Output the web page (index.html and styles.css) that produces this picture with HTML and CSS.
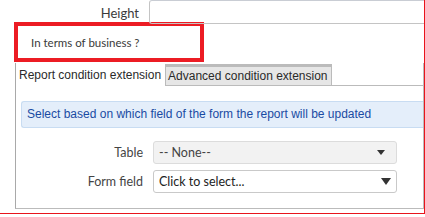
FILE: index.html
```html
<!DOCTYPE html>
<html lang="en">
<head>
  <meta charset="UTF-8">
  <title>Report condition</title>
  <link rel="stylesheet" href="styles.css">
</head>
<body>
  <div class="frame">
    <div class="height-row">
      <label class="row-label">Height</label>
      <div class="text-input"></div>
    </div>

    <div class="note">In terms of business ?</div>

    <div class="panel">
      <div class="tabs">
        <div class="tab active">Report condition extension</div>
        <div class="tab">Advanced condition extension</div>
        <div class="tab-rest"></div>
      </div>

      <div class="info">Select based on which field of the form the report will be updated</div>

      <div class="field-row">
        <label class="field-label">Table</label>
        <div class="select disabled">
          <span>-- None--</span>
          <span class="arrow small"></span>
        </div>
      </div>
      <div class="field-row">
        <label class="field-label">Form field</label>
        <div class="select">
          <span>Click to select...</span>
          <span class="arrow"></span>
        </div>
      </div>
    </div>
  </div>
</body>
</html>
```

FILE: styles.css
```css
body {
  margin: 0;
  padding: 0;
  background: #fff;
  font-family: Lato, "Liberation Sans", sans-serif;
  color: #3a3a3a;
  overflow: hidden;
}

.frame {
  width: 424px;
  height: 213px;
  border-right: 1px solid #e8141c;
  border-bottom: 1px solid #e8141c;
  overflow: hidden;
}

.height-row {
  display: flex;
  height: 22px;
}

.row-label {
  width: 139px;
  text-align: right;
  font-size: 13px;
  line-height: 26px;
}

.text-input {
  margin-left: 10px;
  flex: 1;
  height: 22px;
  border: 1px solid #c4c4c4;
  border-top-color: #c9cdd4;
  border-right: none;
  border-radius: 3px 0 0 3px;
  margin-bottom: -1px;
}

.note {
  margin-left: 14px;
  width: 169px;
  height: 32px;
  border: 4px solid #ec1c24;
  padding-left: 13px;
  font-size: 11.5px;
  line-height: 33px;
}

.panel {
  margin-top: 1px;
  margin-left: 15px;
  width: 407px;
  height: 145px;
  border-left: 1px solid #a9a9a9;
  border-right: 1px solid #bbb;
  border-bottom: 1px solid #bbb;
}

.tabs {
  display: flex;
  height: 23px;
}

.tab {
  font-family: "Liberation Sans", sans-serif;
  font-size: 12px;
  padding: 0 3px;
  line-height: 24px;
  color: #2a2a2a;
  border-bottom: 1px solid #bbb;
}

.tab.active {
  border-bottom-color: transparent;
  padding-right: 4px;
}

.tab:not(.active) {
  background: #e6e6e6;
  border: 1px solid #bbb;
  border-top: 3px solid #bbb;
  margin-top: 1px;
  line-height: 19px;
  padding: 0 3px 0 2px;
}

.tab-rest {
  flex: 1;
  border-bottom: 1px solid #bbb;
}

.info {
  margin: 15px 0 0 5px;
  height: 25px;
  border: 1px solid #c8dcf2;
  border-right: none;
  border-radius: 3px 0 0 3px;
  background: #e4eefa;
  color: #1a4ba3;
  font-family: "Liberation Sans", sans-serif;
  font-size: 12px;
  line-height: 25px;
  padding-left: 5px;
}

.field-row {
  display: flex;
  align-items: center;
  margin-top: 6px;
}

.info + .field-row {
  margin-top: 13px;
}

.field-label {
  width: 127px;
  text-align: right;
  font-size: 12.5px;
  color: #444;
}

.select {
  margin-left: 10px;
  width: 232px;
  height: 21px;
  border: 1px solid #c9c9c9;
  border-radius: 3px;
  display: flex;
  align-items: center;
  justify-content: space-between;
  padding: 0 5px;
  font-size: 12.5px;
  color: #222;
}

.select.disabled {
  background: #f2f2f2;
  border-color: #dcdcdc;
  color: #444;
}

.arrow {
  width: 0;
  height: 0;
  border-left: 5px solid transparent;
  border-right: 5px solid transparent;
  border-top: 7px solid #333;
}

.arrow.small {
  border-left-width: 4px;
  border-right-width: 4px;
  border-top-width: 5px;
  margin-right: 6px;
}
```
